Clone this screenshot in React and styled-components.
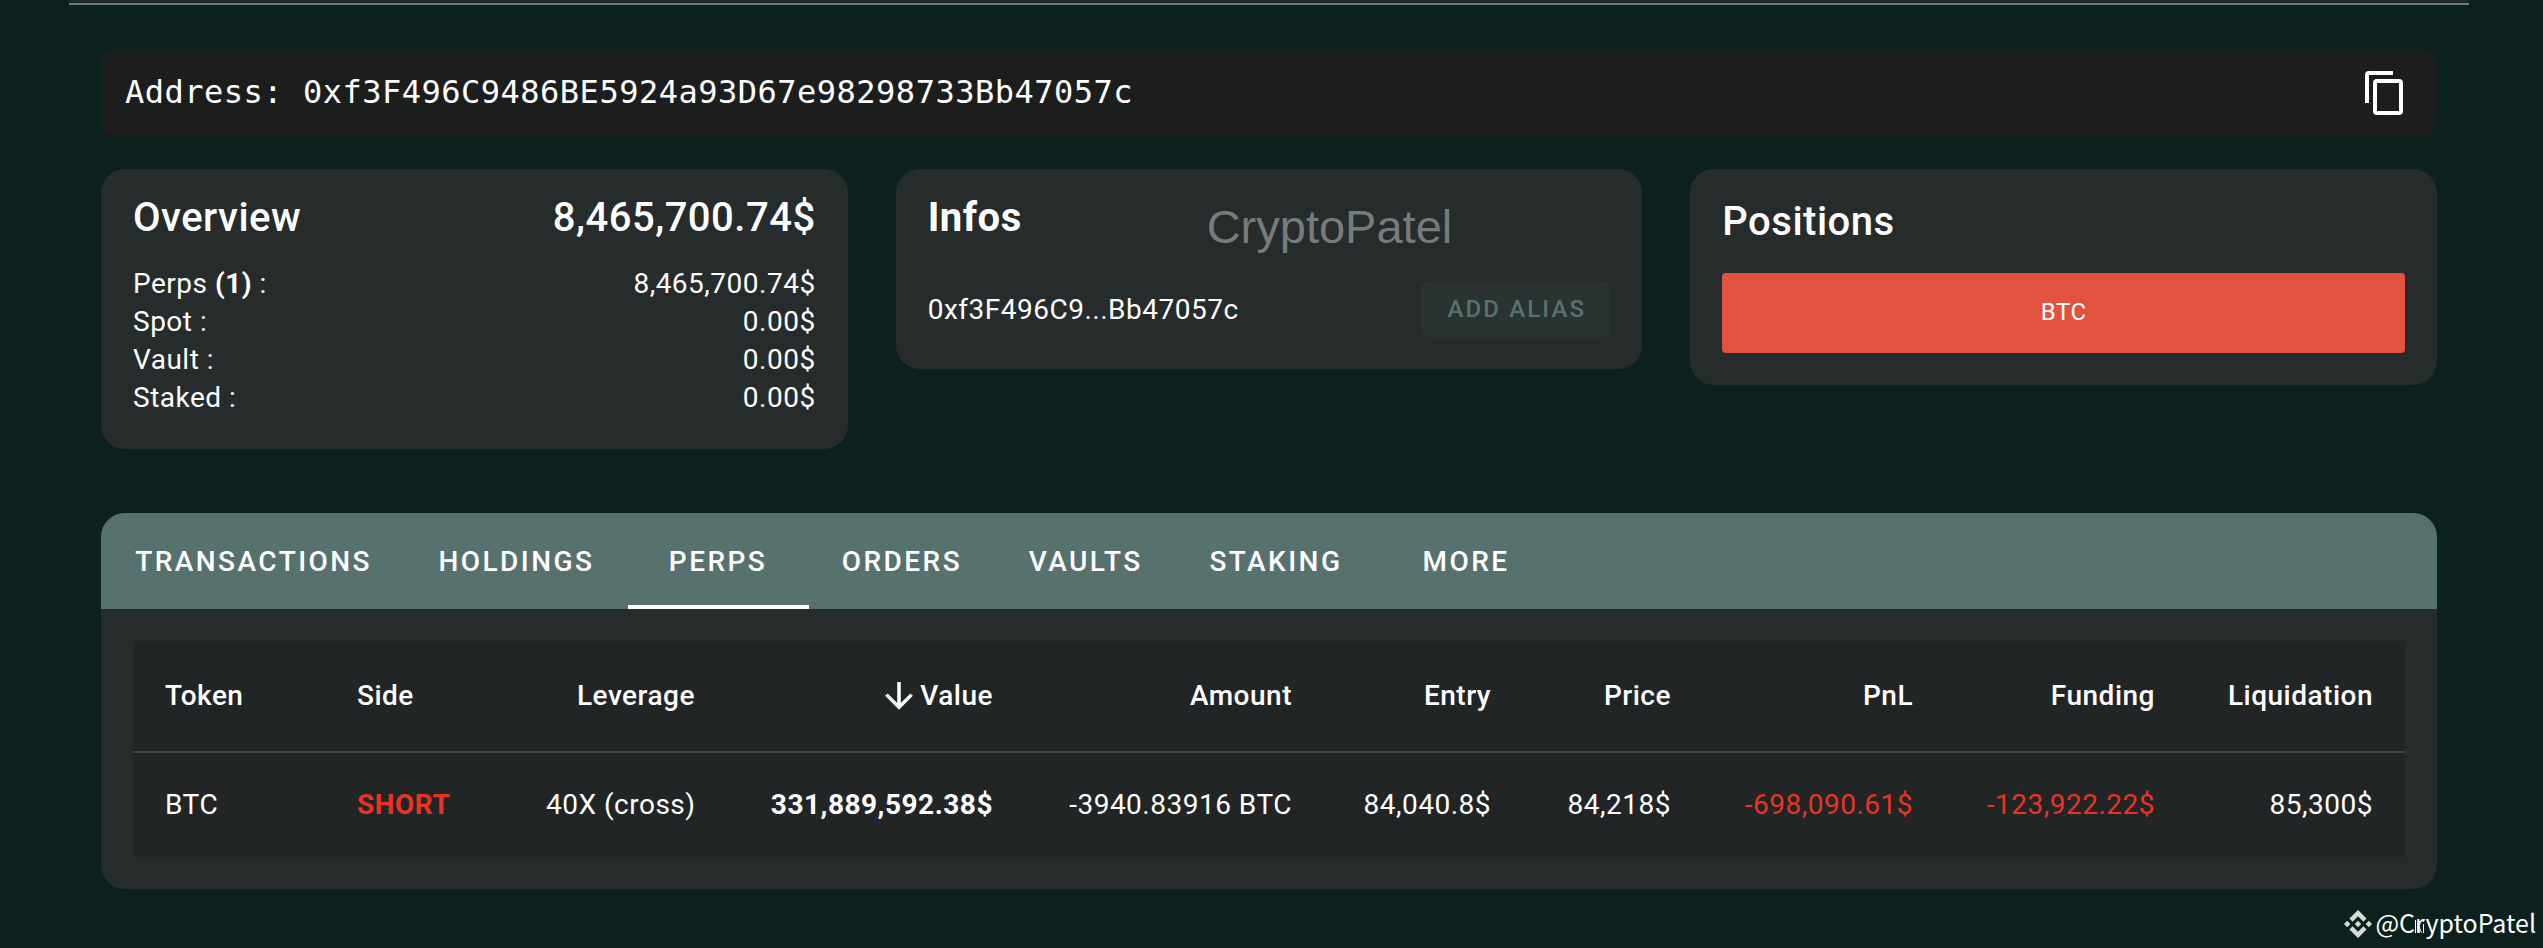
import styled, { createGlobalStyle } from 'styled-components';

const ADDRESS = '0xf3F496C9486BE5924a93D67e98298733Bb47057c';

const balances = [
  { label: 'Perps', count: 1, value: '8,465,700.74$' },
  { label: 'Spot', value: '0.00$' },
  { label: 'Vault', value: '0.00$' },
  { label: 'Staked', value: '0.00$' }
];

const tabs = [
  'Transactions',
  'Holdings',
  'Perps',
  'Orders',
  'Vaults',
  'Staking',
  'More'
];

const columns = [
  { key: 'token', label: 'Token', width: 192, align: 'left' },
  { key: 'side', label: 'Side', width: 189, align: 'left' },
  { key: 'leverage', label: 'Leverage', width: 213 },
  { key: 'value', label: 'Value', width: 298, sorted: true },
  { key: 'amount', label: 'Amount', width: 299 },
  { key: 'entry', label: 'Entry', width: 199 },
  { key: 'price', label: 'Price', width: 180 },
  { key: 'pnl', label: 'PnL', width: 242 },
  { key: 'funding', label: 'Funding', width: 242 },
  { key: 'liquidation', label: 'Liquidation', width: 218 }
];

const positions = [
  {
    token: { text: 'BTC' },
    side: { text: 'SHORT', bold: true, negative: true },
    leverage: { text: '40X (cross)' },
    value: { text: '331,889,592.38$', bold: true },
    amount: { text: '-3940.83916 BTC' },
    entry: { text: '84,040.8$' },
    price: { text: '84,218$' },
    pnl: { text: '-698,090.61$', negative: true },
    funding: { text: '-123,922.22$', negative: true },
    liquidation: { text: '85,300$' }
  }
];

const CopyIcon = () => (
  <svg width="48" height="48" viewBox="0 0 24 24" fill="currentColor">
    <path d="M19,21H8V7H19M19,5H8A2,2 0 0,0 6,7V21A2,2 0 0,0 8,23H19A2,2 0 0,0 21,21V7A2,2 0 0,0 19,5M16,1H4A2,2 0 0,0 2,3V17H4V3H16V1Z" />
  </svg>
);

const App = () => (
  <Page>
    <GlobalStyle />
    <TopRule />
    <Content>
      <AddressBar>
        <AddressText>Address: {ADDRESS}</AddressText>
        <CopyButton aria-label="Copy address">
          <CopyIcon />
        </CopyButton>
      </AddressBar>

      <Cards>
        <Card>
          <CardTitle>
            <span>Overview</span>
            <span>8,465,700.74$</span>
          </CardTitle>
          <Balances>
            {balances.map(({ label, count, value }) => (
              <Balance key={label}>
                <span>
                  {label} {count && <b>({count})</b>} :
                </span>
                <span>{value}</span>
              </Balance>
            ))}
          </Balances>
        </Card>

        <Card>
          <CardTitle $bold>Infos</CardTitle>
          <AliasRow>
            <span>0xf3F496C9...Bb47057c</span>
            <AliasButton>Add alias</AliasButton>
          </AliasRow>
          <Watermark>CryptoPatel</Watermark>
        </Card>

        <Card>
          <PositionsTitle>Positions</PositionsTitle>
          <PositionBar>BTC</PositionBar>
        </Card>
      </Cards>

      <Panel>
        <Tabs>
          {tabs.map((tab) => (
            <Tab key={tab} $isActive={tab === 'Perps'}>
              {tab}
            </Tab>
          ))}
        </Tabs>
        <PanelBody>
          <Table>
            <colgroup>
              {columns.map(({ key, width }) => (
                <Column key={key} $width={width} />
              ))}
            </colgroup>
            <thead>
              <tr>
                {columns.map(({ key, label, align, sorted }) => (
                  <HeadCell key={key} $align={align}>
                    <HeadLabel $align={align}>
                      {sorted && (
                        <SortArrow viewBox="0 0 24 24">
                          <path d="M11,4H13V16L18.5,10.5L19.92,11.92L12,19.84L4.08,11.92L5.5,10.5L11,16V4Z" />
                        </SortArrow>
                      )}
                      {label}
                    </HeadLabel>
                  </HeadCell>
                ))}
              </tr>
            </thead>
            <tbody>
              {positions.map((position) => (
                <tr key={position.token.text}>
                  {columns.map(({ key, align }) => (
                    <Cell
                      key={key}
                      $align={align}
                      $bold={position[key].bold}
                      $negative={position[key].negative}
                    >
                      {position[key].text}
                    </Cell>
                  ))}
                </tr>
              ))}
            </tbody>
          </Table>
        </PanelBody>
      </Panel>
    </Content>

    <Signature>
      <BinanceIcon viewBox="0 0 24 24">
        <path d="M16.624 13.92l2.717 2.716-7.353 7.353-7.353-7.352 2.717-2.717 4.636 4.66 4.636-4.66zm4.637-4.636L24 12l-2.715 2.716L18.568 12l2.693-2.716zm-9.272 0l2.716 2.692-2.717 2.717L9.272 12l2.716-2.715zm-9.273 0L5.41 12l-2.692 2.692L0 12l2.716-2.716zM11.99.01l7.353 7.33-2.717 2.715-4.636-4.636-4.636 4.66-2.717-2.716L11.989.011z" />
      </BinanceIcon>
      <Handle>
        @CryptoPatel
        <Cursor viewBox="0 0 10 13">
          <path d="M0.5 0V13M3 0.5V12.5M3 7L6 1M3.5 6L6.5 12.5M8.5 0V2M8.5 4V13" />
        </Cursor>
      </Handle>
    </Signature>
  </Page>
);

export default App;

const GlobalStyle = createGlobalStyle`
  * {
    box-sizing: border-box;
  }

  body {
    margin: 0;
    background-color: #0c201e;
    color: #ffffff;
    font-family: Roboto, sans-serif;
    font-size: 28px;
    letter-spacing: 0.5px;
  }

  button {
    border: none;
    color: inherit;
    font-family: inherit;
  }
`;

const Page = styled.div`
  position: relative;
  height: 948px;
  overflow: hidden;
`;

const TopRule = styled.div`
  width: 2400px;
  height: 5px;
  margin-left: 69px;
  background-color: #1c2b29;
  border-bottom: 2px solid #6f7c79;
`;

const Content = styled.main`
  width: 2336px;
  margin: 44px 0 0 101px;
`;

const AddressBar = styled.div`
  display: flex;
  align-items: center;
  justify-content: space-between;
  height: 88px;
  padding: 0 28px 0 24px;
  border-radius: 16px;
  background-color: #1c1e1d;
`;

const AddressText = styled.span`
  padding-bottom: 2px;
  font-family: 'DejaVu Sans Mono', monospace;
  font-size: 32px;
`;

const CopyButton = styled.button`
  display: flex;
  padding: 0;
  background: none;
  cursor: pointer;
`;

const Cards = styled.section`
  display: grid;
  grid-template-columns: repeat(3, 1fr);
  gap: 48px;
  align-items: start;
  height: 344px;
  margin-top: 32px;
`;

const Card = styled.div`
  position: relative;
  padding: 16px 32px 32px;
  border-radius: 24px;
  background-color: #262c2c;
`;

const CardTitle = styled.div`
  display: flex;
  justify-content: space-between;
  font-size: 40px;
  font-weight: ${(props) => (props.$bold ? 700 : 500)};
  line-height: 66px;
`;

const PositionsTitle = styled(CardTitle)`
  padding-top: 4px;
`;

const Balances = styled.div`
  padding: 14px 0 0;
`;

const Balance = styled.div`
  display: flex;
  justify-content: space-between;
  line-height: 38px;
`;

const AliasRow = styled.div`
  display: flex;
  align-items: center;
  justify-content: space-between;
  height: 56px;
  margin-top: 30px;
`;

const AliasButton = styled.button`
  width: 189px;
  height: 56px;
  padding: 0 0 0 2px;
  border-radius: 8px;
  background-color: #2b3332;
  color: #57726e;
  font-size: 24px;
  font-weight: 500;
  letter-spacing: 2.14px;
  text-transform: uppercase;
`;

const Watermark = styled.span`
  position: absolute;
  top: 31px;
  left: 311px;
  color: #757c7b;
  font-family: 'Liberation Sans', Arial, sans-serif;
  font-size: 47px;
  line-height: 54px;
  letter-spacing: 0;
`;

const PositionBar = styled.div`
  display: flex;
  align-items: center;
  justify-content: center;
  height: 80px;
  margin-top: 18px;
  padding-bottom: 2px;
  border-radius: 4px;
  background-color: #e15241;
  font-size: 24px;
`;

const Panel = styled.section`
  overflow: hidden;
  border-radius: 24px;
  background-color: #262c2c;
`;

const Tabs = styled.nav`
  display: flex;
  height: 96px;
  padding-left: 1px;
  background-color: #57726e;
`;

const Tab = styled.button`
  min-width: 181px;
  padding: 4px 33.2px 0;
  border-bottom: 4px solid
    ${(props) => (props.$isActive ? '#ffffff' : 'transparent')};
  background: none;
  font-size: 28px;
  font-weight: 500;
  letter-spacing: 2.45px;
  text-transform: uppercase;
`;

const PanelBody = styled.div`
  padding: 32px;
`;

const Table = styled.table`
  width: 100%;
  table-layout: fixed;
  border-spacing: 0;
  background-color: #212526;
`;

const Column = styled.col`
  width: ${(props) => props.$width}px;
`;

const BaseCell = styled.td`
  padding: 0 32px 2px;
  text-align: ${(props) => props.$align || 'right'};
  white-space: nowrap;
`;

const HeadCell = styled(BaseCell).attrs({ as: 'th' })`
  height: 112px;
  padding-bottom: 1px;
  border-bottom: 2px solid #3f4444;
  font-weight: 500;
`;

const HeadLabel = styled.div`
  display: flex;
  align-items: center;
  justify-content: ${(props) =>
    props.$align === 'left' ? 'flex-start' : 'flex-end'};
`;

const SortArrow = styled.svg`
  width: 42px;
  height: 42px;
  margin: -6px 0;
  fill: currentColor;
`;

const Cell = styled(BaseCell)`
  height: 104px;
  color: ${(props) => (props.$negative ? '#ea3323' : '#ffffff')};
  font-weight: ${(props) => (props.$bold ? 700 : 400)};
`;

const Signature = styled.div`
  position: absolute;
  right: 7px;
  bottom: 8px;
  display: flex;
  align-items: center;
  gap: 3px;
`;

const BinanceIcon = styled.svg`
  width: 28px;
  height: 28px;
  margin-top: 4px;
  fill: #d8dbda;
`;

const Handle = styled.span`
  position: relative;
  font-family: 'Noto Sans CJK SC', 'Noto Sans', sans-serif;
  font-size: 25px;
  line-height: 36px;
  letter-spacing: 0;
`;

const Cursor = styled.svg`
  position: absolute;
  top: 16px;
  left: 40px;
  width: 10px;
  height: 13px;
  fill: none;
  stroke: #ffffff;
`;
